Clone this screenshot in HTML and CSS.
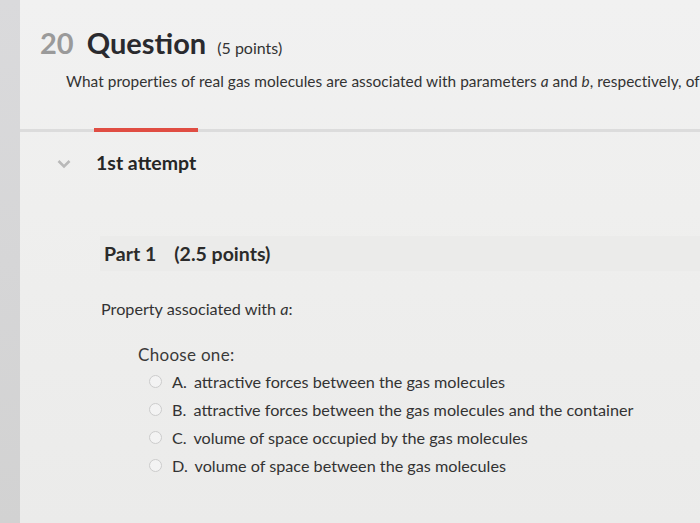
FILE: index.html
```html
<!DOCTYPE html>
<html>
<head>
<meta charset="utf-8">
<link rel="stylesheet" href="styles.css">
</head>
<body>
<div class="page">
  <div class="side"></div>
  <div class="main">
    <header class="qhead">
      <h1 class="qtitle"><span class="qnum">20</span> Question <span class="qpts">(5 points)</span></h1>
      <p class="qtext">What properties of real gas molecules are associated with parameters <i>a</i> and <i>b</i>, respectively, of the</p>
    </header>
    <div class="tabs"><div class="tab-active"></div></div>
    <div class="attempt">
      <svg class="chev" width="14" height="10" viewBox="0 0 14 10"><path d="M1.5 2 L7 7.5 L12.5 2" fill="none" stroke="#b9b9b9" stroke-width="2.6"/></svg>
      <span class="attempt-label">1st attempt</span>
    </div>
    <div class="part">
      <div class="part-head"><span>Part 1</span><span class="part-pts">(2.5 points)</span></div>
      <p class="prompt">Property associated with <i>a</i>:</p>
      <div class="choices">
        <div class="choose">Choose one:</div>
        <ul class="opts">
          <li><span class="radio"></span><span class="letter">A.</span> attractive forces between the gas molecules</li>
          <li><span class="radio"></span><span class="letter">B.</span> attractive forces between the gas molecules and the container</li>
          <li><span class="radio"></span><span class="letter">C.</span> volume of space occupied by the gas molecules</li>
          <li><span class="radio"></span><span class="letter">D.</span> volume of space between the gas molecules</li>
        </ul>
      </div>
    </div>
  </div>
</div>
</body>
</html>
```
FILE: styles.css
```css
html, body { margin: 0; padding: 0; }
body {
  width: 700px; height: 523px; overflow: hidden;
  font-family: Lato, "Open Sans", sans-serif;
  background: #e9e9e7;
}
.page { display: flex; height: 523px; }
.side { width: 20px; background: linear-gradient(#dadadc, #d2d2d2); flex: none; }
.main {
  flex: 1; min-width: 0;
  background: linear-gradient(#f1f1f1 0%, #efefee 40%, #ebebea 100%);
  overflow: hidden;
}
.qhead { padding: 27px 0 0 20px; }
.qtitle { margin: 0; font-size: 29px; font-weight: 700; color: #2a2a2e; white-space: nowrap; line-height: 32px; }
.qnum { color: #9a9a9a; font-weight: 700; margin-right: 6px; }
.qpts { font-size: 16px; font-weight: 400; color: #333; margin-left: 4px; }
.qtext { margin: 7px 0 0 26px; font-size: 15.4px; color: #333; white-space: nowrap; line-height: 20px; letter-spacing: 0.05px; }
.tabs { margin-top: 38px; height: 3px; background: #dcdcdc; position: relative; }
.tab-active { position: absolute; left: 74px; top: -1px; width: 104px; height: 4px; background: #e04d43; }
.attempt { display: flex; align-items: center; padding: 18px 0 0 37px; height: 24px; }
.chev { margin-right: 25px; margin-top: 3px; }
.attempt-label { font-size: 19.5px; font-weight: 700; color: #262626; }
.part { margin-top: 62px; padding-left: 80px; }
.part-head {
  font-size: 19.5px; font-weight: 700; color: #2b2b2b;
  padding: 6px 0 6px 4px; background: #ebebea; display: flex; gap: 18px;
}
.prompt { margin: 28px 0 0 1px; font-size: 16.2px; color: #333; line-height: 20px; }
.choices { padding: 26px 0 0 38px; }
.choose { font-size: 17px; color: #3a3a3a; letter-spacing: 0.3px; line-height: 20px; }
.opts { list-style: none; margin: 2px 0 0 0; padding: 0 0 0 11px; }
.opts li { display: flex; align-items: center; height: 28px; font-size: 16.2px; color: #333; white-space: pre; }
.radio { width: 11px; height: 11px; border: 1px solid #cccccc; border-radius: 50%; background: #f3f3f3; margin-right: 10px; flex: none; }
.letter { margin-right: 3px; }
```
